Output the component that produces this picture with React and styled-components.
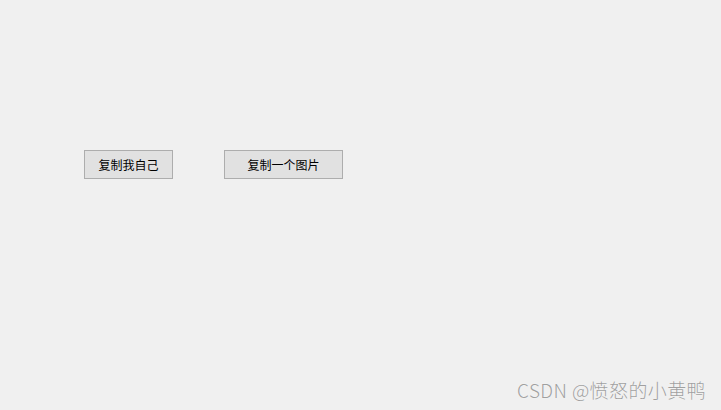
import React from 'react';
import styled, { createGlobalStyle } from 'styled-components';

const GlobalStyle = createGlobalStyle`
  html, body {
    margin: 0;
    padding: 0;
    background: #f0f0f0;
  }
`;

const Window = styled.div`
  position: relative;
  width: 721px;
  height: 410px;
  background: #f0f0f0;
  box-sizing: border-box;
  padding: 150px 0 0 84px;
  font-family: "Noto Sans CJK SC", "Noto Sans", sans-serif;
  overflow: hidden;
`;

const ButtonRow = styled.div`
  display: flex;
  gap: 51px;
`;

const Button = styled.button`
  width: ${(p) => p.$width}px;
  height: 29px;
  box-sizing: border-box;
  background: #e1e1e1;
  border: 1px solid #adadad;
  border-radius: 0;
  padding: 0;
  margin: 0;
  font-family: "Noto Sans CJK SC", sans-serif;
  font-size: 12px;
  color: #000;
  line-height: 27px;
`;

const Watermark = styled.div`
  position: absolute;
  right: 15px;
  bottom: 7px;
  font-family: "Noto Sans CJK SC", "Noto Sans", sans-serif;
  font-size: 19px;
  font-weight: 300;
  letter-spacing: 0.4px;
  color: #a0a0a0;
  text-shadow: 0 0 1px #fff;
  white-space: nowrap;
`;

export default function App() {
  return (
    <>
      <GlobalStyle />
      <Window>
        <ButtonRow>
          <Button $width={89}>复制我自己</Button>
          <Button $width={119}>复制一个图片</Button>
        </ButtonRow>
        <Watermark>CSDN @愤怒的小黄鸭</Watermark>
      </Window>
    </>
  );
}
